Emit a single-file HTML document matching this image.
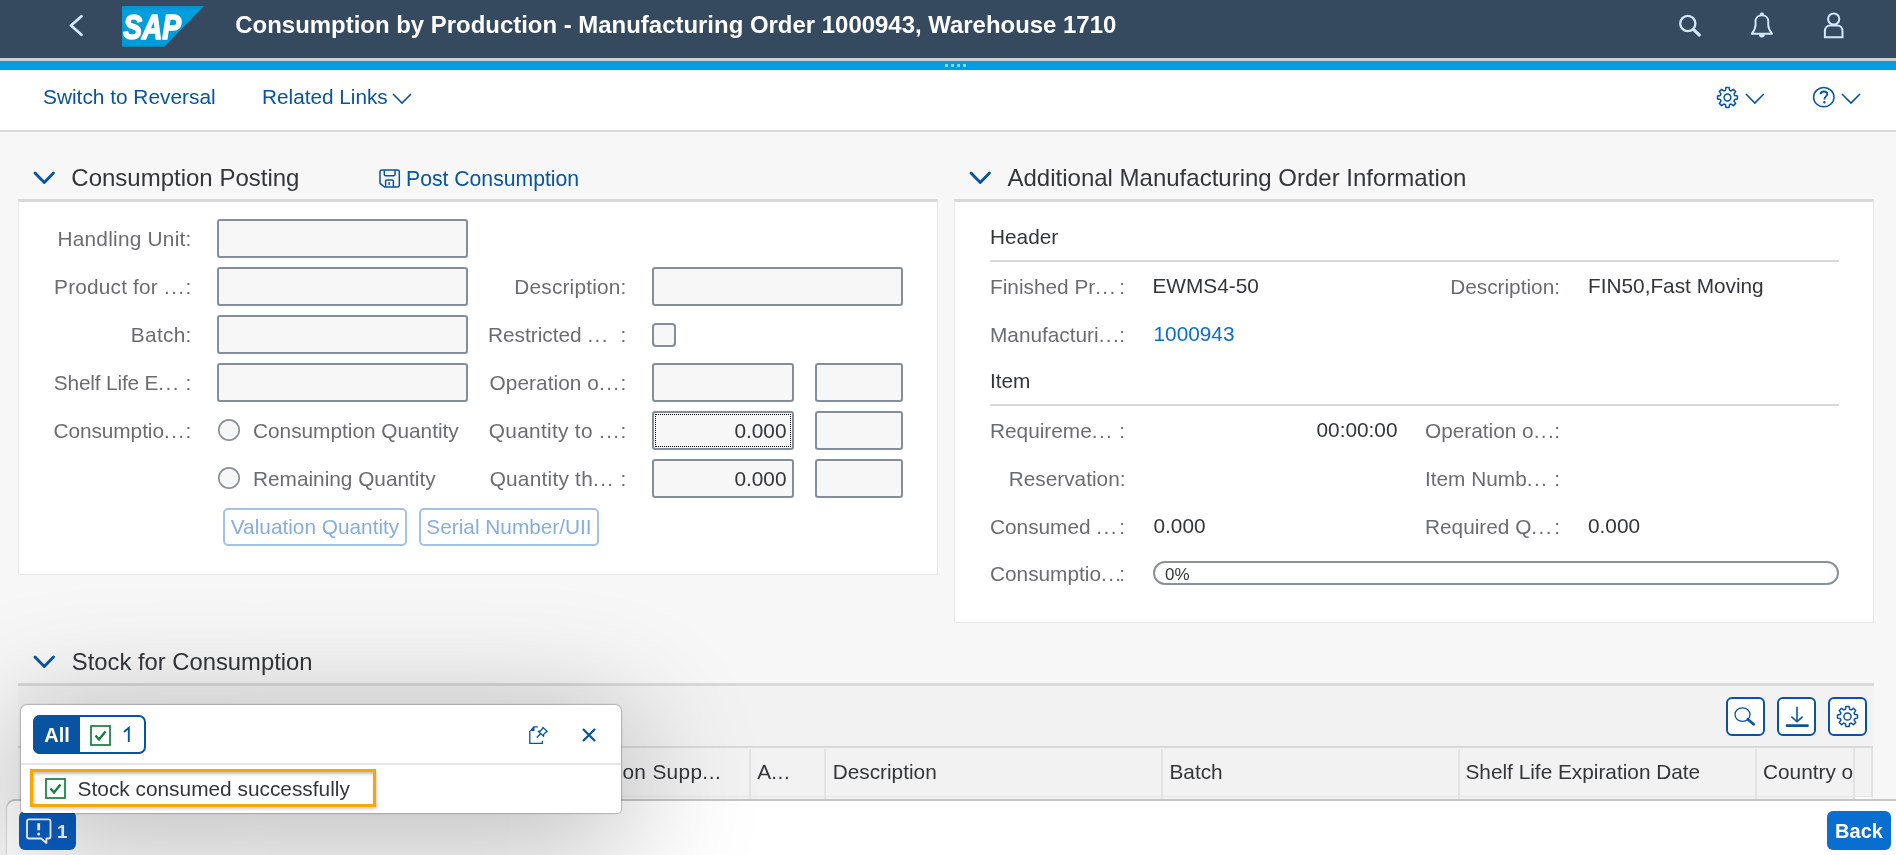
<!DOCTYPE html>
<html><head><meta charset="utf-8"><title>Consumption by Production</title>
<style>
html,body{margin:0;padding:0;width:1896px;height:855px;overflow:hidden;background:#f7f7f7;font-family:"Liberation Sans",sans-serif}
#w{position:absolute;left:0;top:0;width:1896px;height:855px;overflow:hidden;will-change:transform;-webkit-font-smoothing:antialiased}
.t{position:absolute;white-space:nowrap}
.r{position:absolute}
.e{letter-spacing:1.4px}
</style></head><body><div id="w">
<div class="r" style="left:0px;top:0px;width:1896px;height:855px;background:#f7f7f7"></div>
<div class="r" style="left:0px;top:0px;width:1896px;height:58px;background:#354a5f"></div>
<div class="r" style="left:0px;top:58px;width:1896px;height:3px;background:#cfd0d1"></div>
<div class="r" style="left:0px;top:61px;width:1896px;height:9px;background:#009de0"></div>
<div class="r" style="left:945px;top:64px;width:3px;height:3px;background:#93d2f1"></div>
<div class="r" style="left:951px;top:64px;width:3px;height:3px;background:#93d2f1"></div>
<div class="r" style="left:957px;top:64px;width:3px;height:3px;background:#93d2f1"></div>
<div class="r" style="left:963px;top:64px;width:3px;height:3px;background:#93d2f1"></div>
<svg class="r" style="left:60px;top:10px" width="32" height="32" viewBox="0 0 32 32"><path d="M21.5 6.3 L11 15.5 L21.5 24.8" fill="none" stroke="#d1e8ff" stroke-width="2.8" stroke-linecap="round" stroke-linejoin="round"/></svg>
<svg class="r" style="left:122px;top:6px" width="82" height="41" viewBox="0 0 82 41">
<defs><linearGradient id="lg" x1="0" y1="0" x2="0" y2="1"><stop offset="0" stop-color="#0890cf"/><stop offset="0.12" stop-color="#009fdd"/><stop offset="1" stop-color="#009ad9"/></linearGradient></defs>
<polygon points="0,0 82,0 42.3,40.7 0,40.7" fill="url(#lg)"/>
<text x="1.2" y="33" font-family="Liberation Sans" font-weight="bold" font-style="italic" font-size="35" fill="#fff" stroke="#fff" stroke-width="1.7" stroke-linejoin="round" textLength="58" lengthAdjust="spacingAndGlyphs">SAP</text>
</svg>
<div class="t" style="left:235.3px;top:13.33px;font-size:23.95px;line-height:23.95px;color:#ffffff;font-weight:bold;">Consumption by Production - Manufacturing Order 1000943, Warehouse 1710</div>
<svg class="r" style="left:1672px;top:8px" width="36" height="36" viewBox="0 0 36 36"><circle cx="15.8" cy="15.5" r="7.6" fill="none" stroke="#d1e8ff" stroke-width="2.3"/><path d="M21.6 21.6 L27.3 27" stroke="#d1e8ff" stroke-width="3.2" stroke-linecap="round"/></svg>
<svg class="r" style="left:1744px;top:8px" width="36" height="36" viewBox="0 0 36 36"><path d="M7.8 25.7 C10.5 22.5 11.6 20 11.6 16.5 L11.5 13.5 C11.5 9.5 14.5 7.2 17.9 7.2 C21.3 7.2 24.3 9.5 24.3 13.5 L24.2 16.5 C24.2 20 25.3 22.5 28 25.7 Z" fill="none" stroke="#d1e8ff" stroke-width="1.9" stroke-linejoin="round"/><path d="M14.9 26.3 A3 3.2 0 0 0 20.9 26.3 Z" fill="#d1e8ff"/><ellipse cx="17.9" cy="6" rx="1.9" ry="1.4" fill="#d1e8ff"/></svg>
<svg class="r" style="left:1816px;top:8px" width="36" height="36" viewBox="0 0 36 36"><circle cx="17.7" cy="11" r="5.6" fill="none" stroke="#d1e8ff" stroke-width="2"/><path d="M8.9 29.3 L8.9 23.5 C8.9 19.5 11.5 17.5 14 17.5 L21.5 17.5 C24 17.5 26.5 19.5 26.5 23.5 L26.5 29.3 Z" fill="none" stroke="#d1e8ff" stroke-width="2"/></svg>
<div class="r" style="left:0px;top:70px;width:1896px;height:60px;background:#ffffff"></div>
<div class="r" style="left:0px;top:130px;width:1896px;height:2px;background:#d9d9d9"></div>
<div class="t" style="left:43px;top:86.85px;font-size:20.85px;line-height:20.85px;color:#0854a0;font-weight:normal;">Switch to Reversal</div>
<div class="t" style="left:262px;top:86.94px;font-size:20.75px;line-height:20.75px;color:#0854a0;font-weight:normal;">Related Links</div>
<svg class="r" style="left:390px;top:91px" width="24" height="15" viewBox="0 0 24 15"><path d="M3 3 L12.0 12 L21 3" fill="none" stroke="#0854a0" stroke-width="1.6" stroke-linejoin="miter" stroke-linecap="butt"/></svg>
<svg class="r" style="left:1714.3px;top:83.9px" width="27" height="27" viewBox="0 0 27 27"><path d="M20.66 11.44 L23.42 11.90 L23.42 15.10 L20.66 15.56 L20.02 17.11 L21.65 19.38 L19.38 21.65 L17.11 20.02 L15.56 20.66 L15.10 23.42 L11.90 23.42 L11.44 20.66 L9.89 20.02 L7.62 21.65 L5.35 19.38 L6.98 17.11 L6.34 15.56 L3.58 15.10 L3.58 11.90 L6.34 11.44 L6.98 9.89 L5.35 7.62 L7.62 5.35 L9.89 6.98 L11.44 6.34 L11.90 3.58 L15.10 3.58 L15.56 6.34 L17.11 6.98 L19.38 5.35 L21.65 7.62 L20.02 9.89 Z" fill="none" stroke="#0854a0" stroke-width="1.5" stroke-linejoin="round"/><circle cx="13.5" cy="13.5" r="3.4" fill="none" stroke="#0854a0" stroke-width="1.5"/></svg>
<svg class="r" style="left:1743.3px;top:91px" width="23.7" height="15" viewBox="0 0 23.7 15"><path d="M3 3 L11.85 12 L20.7 3" fill="none" stroke="#0854a0" stroke-width="1.6" stroke-linejoin="miter" stroke-linecap="butt"/></svg>
<svg class="r" style="left:1810px;top:83px" width="28" height="28" viewBox="0 0 28 28"><ellipse cx="13.8" cy="14.2" rx="10.2" ry="9.6" fill="none" stroke="#0854a0" stroke-width="1.5"/><path d="M10.6 11.3 C10.6 9.2 12 8.5 14 8.5 C16 8.5 17.3 9.5 17.3 11.1 C17.3 13.4 14.4 13.5 14.4 16.4" fill="none" stroke="#0854a0" stroke-width="1.8"/><circle cx="14.4" cy="19.3" r="1.2" fill="#0854a0"/></svg>
<svg class="r" style="left:1839px;top:91px" width="24" height="15" viewBox="0 0 24 15"><path d="M3 3 L12.0 12 L21 3" fill="none" stroke="#0854a0" stroke-width="1.6" stroke-linejoin="miter" stroke-linecap="butt"/></svg>
<svg class="r" style="left:31.799999999999997px;top:170px" width="24.5" height="15.5" viewBox="0 0 24.5 15.5"><path d="M3 3 L12.25 12.5 L21.5 3" fill="none" stroke="#0854a0" stroke-width="2.9" stroke-linejoin="round" stroke-linecap="round"/></svg>
<div class="t" style="left:71.3px;top:166.18px;font-size:24px;line-height:24px;color:#32363a;font-weight:normal;">Consumption Posting</div>
<svg class="r" style="left:377px;top:166px" width="26" height="24" viewBox="0 0 26 24"><path d="M5 4 L20.5 4 Q22.3 4 22.3 5.8 L22.3 19.3 Q22.3 21 20.5 21 L7.5 21 L3 17.3 L3 5.8 Q3 4 5 4 Z" fill="none" stroke="#0854a0" stroke-width="1.5" stroke-linejoin="round"/><path d="M7.3 4 L7.3 8.5 Q7.3 9.8 8.6 9.8 L16.7 9.8 Q18 9.8 18 8.5 L18 4" fill="none" stroke="#0854a0" stroke-width="1.5"/><path d="M8.6 21 L8.6 15.2 Q8.6 14 9.8 14 L15.2 14 Q16.4 14 16.4 15.2 L16.4 21" fill="none" stroke="#0854a0" stroke-width="1.5"/><rect x="11.3" y="16.2" width="1.6" height="2.6" fill="#0854a0"/></svg>
<div class="t" style="left:406px;top:167.55px;font-size:21.2px;line-height:21.2px;color:#0854a0;font-weight:normal;">Post Consumption</div>
<div class="r" style="left:18px;top:199px;width:920px;height:376px;background:#fff;border:1px solid #e8e8e8;border-top:3px solid #d9d9d9;box-sizing:border-box"></div>
<div class="r" style="left:954px;top:199px;width:920px;height:424px;background:#fff;border:1px solid #e8e8e8;border-top:3px solid #d9d9d9;box-sizing:border-box"></div>
<div class="t" style="right:1704.45px;top:228.69px;font-size:20.8px;line-height:20.8px;color:#6a6d70;font-weight:normal;letter-spacing:0.25px">Handling Unit:</div>
<div class="t" style="right:1704.5px;top:276.69px;font-size:20.8px;line-height:20.8px;color:#6a6d70;font-weight:normal;letter-spacing:0.2px">Product for <span class="e">...</span>:</div>
<div class="t" style="right:1704.4px;top:324.69px;font-size:20.8px;line-height:20.8px;color:#6a6d70;font-weight:normal;letter-spacing:0.3px">Batch:</div>
<div class="t" style="right:1704.85px;top:372.69px;font-size:20.8px;line-height:20.8px;color:#6a6d70;font-weight:normal;letter-spacing:-0.15px">Shelf Life E<span class="e">...</span> :</div>
<div class="t" style="right:1704.75px;top:420.69px;font-size:20.8px;line-height:20.8px;color:#6a6d70;font-weight:normal;letter-spacing:-0.05px">Consumptio<span class="e">...</span>:</div>
<div class="r" style="left:217px;top:219px;width:251px;height:39px;background:#f7f7f7;border:2px solid #858d96;border-radius:3px;box-sizing:border-box"></div>
<div class="r" style="left:217px;top:267px;width:251px;height:39px;background:#f7f7f7;border:2px solid #858d96;border-radius:3px;box-sizing:border-box"></div>
<div class="r" style="left:217px;top:315px;width:251px;height:39px;background:#f7f7f7;border:2px solid #858d96;border-radius:3px;box-sizing:border-box"></div>
<div class="r" style="left:217px;top:363px;width:251px;height:39px;background:#f7f7f7;border:2px solid #858d96;border-radius:3px;box-sizing:border-box"></div>
<svg class="r" style="left:215px;top:415.8px" width="28" height="28" viewBox="0 0 28 28"><circle cx="14" cy="14" r="10.2" fill="#f7f7f7" stroke="#89919a" stroke-width="1.7"/></svg>
<div class="t" style="left:253px;top:420.69px;font-size:20.8px;line-height:20.8px;color:#6a6d70;font-weight:normal;">Consumption Quantity</div>
<svg class="r" style="left:215px;top:464px" width="28" height="28" viewBox="0 0 28 28"><circle cx="14" cy="14" r="10.2" fill="#f7f7f7" stroke="#89919a" stroke-width="1.7"/></svg>
<div class="t" style="left:253px;top:468.69px;font-size:20.8px;line-height:20.8px;color:#6a6d70;font-weight:normal;">Remaining Quantity</div>
<div class="t" style="right:1269.5px;top:276.69px;font-size:20.8px;line-height:20.8px;color:#6a6d70;font-weight:normal;letter-spacing:0.2px">Description:</div>
<div class="t" style="right:1269.7px;top:324.69px;font-size:20.8px;line-height:20.8px;color:#6a6d70;font-weight:normal;letter-spacing:0.0px">Restricted <span class="e">...</span>&nbsp; :</div>
<div class="t" style="right:1269.63px;top:372.69px;font-size:20.8px;line-height:20.8px;color:#6a6d70;font-weight:normal;letter-spacing:0.07px">Operation o<span class="e">...</span>:</div>
<div class="t" style="right:1269.38px;top:420.69px;font-size:20.8px;line-height:20.8px;color:#6a6d70;font-weight:normal;letter-spacing:0.32px">Quantity to <span class="e">...</span>:</div>
<div class="t" style="right:1269.45px;top:468.69px;font-size:20.8px;line-height:20.8px;color:#6a6d70;font-weight:normal;letter-spacing:0.25px">Quantity th<span class="e">...</span> :</div>
<div class="r" style="left:652px;top:267px;width:251px;height:39px;background:#f7f7f7;border:2px solid #858d96;border-radius:3px;box-sizing:border-box"></div>
<div class="r" style="left:652px;top:323px;width:24px;height:24px;background:#f7f7f7;border:2px solid #858d96;border-radius:4px;box-sizing:border-box"></div>
<div class="r" style="left:652px;top:363px;width:142px;height:39px;background:#f7f7f7;border:2px solid #858d96;border-radius:3px;box-sizing:border-box"></div>
<div class="r" style="left:815px;top:363px;width:88px;height:39px;background:#f7f7f7;border:2px solid #858d96;border-radius:3px;box-sizing:border-box"></div>
<div class="r" style="left:652px;top:411px;width:142px;height:39px;background:#f7f7f7;border:2px solid #858d96;border-radius:3px;box-sizing:border-box"></div>
<div class="r" style="left:655px;top:414px;width:136px;height:33px;border:1px dotted #000;box-sizing:border-box"></div>
<div class="t" style="right:1109.5px;top:420.69px;font-size:20.8px;line-height:20.8px;color:#32363a;font-weight:normal;">0.000</div>
<div class="r" style="left:815px;top:411px;width:88px;height:39px;background:#f7f7f7;border:2px solid #858d96;border-radius:3px;box-sizing:border-box"></div>
<div class="r" style="left:652px;top:459px;width:142px;height:39px;background:#f7f7f7;border:2px solid #858d96;border-radius:3px;box-sizing:border-box"></div>
<div class="t" style="right:1109.5px;top:468.69px;font-size:20.8px;line-height:20.8px;color:#32363a;font-weight:normal;">0.000</div>
<div class="r" style="left:815px;top:459px;width:88px;height:39px;background:#f7f7f7;border:2px solid #858d96;border-radius:3px;box-sizing:border-box"></div>
<div class="r" style="left:223px;top:507.5px;width:184px;height:38.5px;border:2px solid #a3c2e6;border-radius:5px;box-sizing:border-box;background:#fff"></div>
<div class="t" style="left:315.0px;transform:translateX(-50%);top:516.69px;font-size:20.8px;line-height:20.8px;color:#85ade0;font-weight:normal;">Valuation Quantity</div>
<div class="r" style="left:419px;top:507.5px;width:180px;height:38.5px;border:2px solid #a3c2e6;border-radius:5px;box-sizing:border-box;background:#fff"></div>
<div class="t" style="left:509.0px;transform:translateX(-50%);top:516.69px;font-size:20.8px;line-height:20.8px;color:#85ade0;font-weight:normal;">Serial Number/UII</div>
<svg class="r" style="left:967.8px;top:170px" width="24.5" height="15.5" viewBox="0 0 24.5 15.5"><path d="M3 3 L12.25 12.5 L21.5 3" fill="none" stroke="#0854a0" stroke-width="2.9" stroke-linejoin="round" stroke-linecap="round"/></svg>
<div class="t" style="left:1007.5px;top:166.18px;font-size:24px;line-height:24px;color:#32363a;font-weight:normal;">Additional Manufacturing Order Information</div>
<div class="t" style="left:990px;top:226.69px;font-size:20.8px;line-height:20.8px;color:#32363a;font-weight:normal;">Header</div>
<div class="r" style="left:990px;top:260px;width:849px;height:2px;background:#d9d9d9"></div>
<div class="t" style="left:990px;top:276.69px;font-size:20.8px;line-height:20.8px;color:#6a6d70;font-weight:normal;">Finished Pr<span class="e">...</span></div>
<div class="t" style="right:771px;top:276.69px;font-size:20.8px;line-height:20.8px;color:#6a6d70;font-weight:normal;">:</div>
<div class="t" style="left:1152.5px;top:275.69px;font-size:20.8px;line-height:20.8px;color:#32363a;font-weight:normal;">EWMS4-50</div>
<div class="t" style="right:336px;top:276.69px;font-size:20.8px;line-height:20.8px;color:#6a6d70;font-weight:normal;">Description:</div>
<div class="t" style="left:1588px;top:275.69px;font-size:20.8px;line-height:20.8px;color:#32363a;font-weight:normal;">FIN50,Fast Moving</div>
<div class="t" style="left:990px;top:324.69px;font-size:20.8px;line-height:20.8px;color:#6a6d70;font-weight:normal;">Manufacturi<span class="e">...</span></div>
<div class="t" style="right:771px;top:324.69px;font-size:20.8px;line-height:20.8px;color:#6a6d70;font-weight:normal;">:</div>
<div class="t" style="left:1153.5px;top:323.69px;font-size:20.8px;line-height:20.8px;color:#0a6ed1;font-weight:normal;">1000943</div>
<div class="t" style="left:990px;top:370.69px;font-size:20.8px;line-height:20.8px;color:#32363a;font-weight:normal;">Item</div>
<div class="r" style="left:990px;top:404px;width:849px;height:2px;background:#d9d9d9"></div>
<div class="t" style="left:990px;top:420.69px;font-size:20.8px;line-height:20.8px;color:#6a6d70;font-weight:normal;">Requireme<span class="e">...</span></div>
<div class="t" style="right:771px;top:420.69px;font-size:20.8px;line-height:20.8px;color:#6a6d70;font-weight:normal;">:</div>
<div class="t" style="right:498.5px;top:419.69px;font-size:20.8px;line-height:20.8px;color:#32363a;font-weight:normal;">00:00:00</div>
<div class="t" style="left:1425px;top:420.69px;font-size:20.8px;line-height:20.8px;color:#6a6d70;font-weight:normal;">Operation o<span class="e">...</span></div>
<div class="t" style="right:336px;top:420.69px;font-size:20.8px;line-height:20.8px;color:#6a6d70;font-weight:normal;">:</div>
<div class="t" style="right:770.5px;top:468.69px;font-size:20.8px;line-height:20.8px;color:#6a6d70;font-weight:normal;">Reservation:</div>
<div class="t" style="left:1425px;top:468.69px;font-size:20.8px;line-height:20.8px;color:#6a6d70;font-weight:normal;">Item Numb<span class="e">...</span></div>
<div class="t" style="right:336px;top:468.69px;font-size:20.8px;line-height:20.8px;color:#6a6d70;font-weight:normal;">:</div>
<div class="t" style="left:990px;top:516.69px;font-size:20.8px;line-height:20.8px;color:#6a6d70;font-weight:normal;">Consumed <span class="e">...</span></div>
<div class="t" style="right:771px;top:516.69px;font-size:20.8px;line-height:20.8px;color:#6a6d70;font-weight:normal;">:</div>
<div class="t" style="left:1153.5px;top:515.69px;font-size:20.8px;line-height:20.8px;color:#32363a;font-weight:normal;">0.000</div>
<div class="t" style="left:1425px;top:516.69px;font-size:20.8px;line-height:20.8px;color:#6a6d70;font-weight:normal;">Required Q<span class="e">...</span></div>
<div class="t" style="right:336px;top:516.69px;font-size:20.8px;line-height:20.8px;color:#6a6d70;font-weight:normal;">:</div>
<div class="t" style="left:1588px;top:515.69px;font-size:20.8px;line-height:20.8px;color:#32363a;font-weight:normal;">0.000</div>
<div class="t" style="left:990px;top:563.69px;font-size:20.8px;line-height:20.8px;color:#6a6d70;font-weight:normal;">Consumptio<span class="e">...</span></div>
<div class="t" style="right:771px;top:563.69px;font-size:20.8px;line-height:20.8px;color:#6a6d70;font-weight:normal;">:</div>
<div class="r" style="left:1153px;top:561px;width:686px;height:24px;border:2px solid #89919a;border-radius:12px;box-sizing:border-box;background:#fff"></div>
<div class="t" style="left:1165px;top:565.91px;font-size:17px;line-height:17px;color:#32363a;font-weight:normal;">0%</div>
<svg class="r" style="left:31.799999999999997px;top:653.5px" width="24.5" height="15.5" viewBox="0 0 24.5 15.5"><path d="M3 3 L12.25 12.5 L21.5 3" fill="none" stroke="#0854a0" stroke-width="2.9" stroke-linejoin="round" stroke-linecap="round"/></svg>
<div class="t" style="left:71.8px;top:649.55px;font-size:23.8px;line-height:23.8px;color:#32363a;font-weight:normal;">Stock for Consumption</div>
<div class="r" style="left:18px;top:683px;width:1856px;height:3px;background:#d9d9d9"></div>
<div class="r" style="left:18px;top:686px;width:1856px;height:61px;background:#f2f2f2"></div>
<div class="r" style="left:1726px;top:697px;width:39px;height:39px;border:2px solid #0854a0;border-radius:6px;box-sizing:border-box;background:#fff"></div>
<div class="r" style="left:1777px;top:697px;width:39px;height:39px;border:2px solid #0854a0;border-radius:6px;box-sizing:border-box;background:#fff"></div>
<div class="r" style="left:1828px;top:697px;width:39px;height:39px;border:2px solid #0854a0;border-radius:6px;box-sizing:border-box;background:#fff"></div>
<svg class="r" style="left:1726px;top:697px" width="39" height="39" viewBox="0 0 39 39"><ellipse cx="16.5" cy="17.6" rx="7.5" ry="6.8" fill="none" stroke="#0854a0" stroke-width="1.3"/><path d="M21.8 22.3 L27.6 27.3" stroke="#0854a0" stroke-width="2.7" stroke-linecap="round"/></svg>
<svg class="r" style="left:1777px;top:697px" width="39" height="39" viewBox="0 0 39 39"><path d="M20 9.8 L20 24.5" stroke="#0854a0" stroke-width="1.6"/><path d="M14.4 19.6 L20 24.8 L25.6 19.6" fill="none" stroke="#0854a0" stroke-width="1.5"/><path d="M10 28.7 L30.5 28.7" stroke="#0854a0" stroke-width="2.7" stroke-linecap="round"/></svg>
<svg class="r" style="left:1834.4px;top:703.0px" width="27" height="27" viewBox="0 0 27 27"><path d="M20.76 11.41 L23.52 11.88 L23.52 15.12 L20.76 15.59 L20.11 17.16 L21.73 19.44 L19.44 21.73 L17.16 20.11 L15.59 20.76 L15.12 23.52 L11.88 23.52 L11.41 20.76 L9.84 20.11 L7.56 21.73 L5.27 19.44 L6.89 17.16 L6.24 15.59 L3.48 15.12 L3.48 11.88 L6.24 11.41 L6.89 9.84 L5.27 7.56 L7.56 5.27 L9.84 6.89 L11.41 6.24 L11.88 3.48 L15.12 3.48 L15.59 6.24 L17.16 6.89 L19.44 5.27 L21.73 7.56 L20.11 9.84 Z" fill="none" stroke="#0854a0" stroke-width="1.5" stroke-linejoin="round"/><circle cx="13.5" cy="13.5" r="3.6" fill="none" stroke="#0854a0" stroke-width="1.5"/></svg>
<div class="r" style="left:18px;top:746px;width:1855px;height:53px;background:#f2f2f2;border-top:2px solid #d9d9d9;box-sizing:border-box"></div>
<div class="r" style="left:18px;top:796px;width:1855px;height:1px;background:#e5e5e5"></div>
<div class="r" style="left:1855px;top:797px;width:16px;height:3px;background:#fff"></div>
<div class="r" style="left:749px;top:749px;width:2px;height:52px;background:#e3e3e3"></div>
<div class="r" style="left:824px;top:749px;width:2px;height:52px;background:#e3e3e3"></div>
<div class="r" style="left:1161px;top:749px;width:2px;height:52px;background:#e3e3e3"></div>
<div class="r" style="left:1458px;top:749px;width:2px;height:52px;background:#e3e3e3"></div>
<div class="r" style="left:1755px;top:749px;width:2px;height:52px;background:#e3e3e3"></div>
<div class="r" style="left:1853px;top:748px;width:1.5px;height:52px;background:#e3e3e3"></div>
<div class="r" style="left:1871px;top:748px;width:2px;height:49px;background:#e3e3e3"></div>
<div class="t" style="right:1174.5px;top:762.09px;font-size:20.8px;line-height:20.8px;color:#32363a;font-weight:normal;letter-spacing:0.35px">ion Supp<span style="letter-spacing:0.6px">&#46;&#46;&#46;</span></div>
<div class="t" style="left:757.3px;top:762.09px;font-size:20.8px;line-height:20.8px;color:#32363a;font-weight:normal;">A<span style="letter-spacing:0.6px">&#46;&#46;&#46;</span></div>
<div class="t" style="left:832.7px;top:762.09px;font-size:20.8px;line-height:20.8px;color:#32363a;font-weight:normal;">Description</div>
<div class="t" style="left:1169.5px;top:762.09px;font-size:20.8px;line-height:20.8px;color:#32363a;font-weight:normal;">Batch</div>
<div class="t" style="left:1465.5px;top:762.09px;font-size:20.8px;line-height:20.8px;color:#32363a;font-weight:normal;">Shelf Life Expiration Date</div>
<div class="t" style="left:1763px;top:762.09px;width:90px;overflow:hidden;font-size:20.8px;line-height:20.8px;color:#32363a">Country of Origin</div>
<div class="r" style="left:7px;top:801px;width:1889px;height:54px;background:#fff;border-top-left-radius:8px;box-shadow:0 -2px 0 #c6c6c6, -1px -1px 1px rgba(0,0,0,0.12)"></div>
<div class="r" style="left:19px;top:811px;width:57px;height:39px;background:#0a5fc4;border-radius:6px"></div>
<svg class="r" style="left:19px;top:811px" width="40" height="39" viewBox="0 0 40 39"><path d="M10 8.3 L29.5 8.3 Q31.5 8.3 31.5 10.3 L31.5 25.5 Q31.5 27.5 29.5 27.5 L27.4 27.5 L27.4 32 L22.2 27.5 L10 27.5 Q8 27.5 8 25.5 L8 10.3 Q8 8.3 10 8.3 Z" fill="none" stroke="#fff" stroke-width="1.8" stroke-linejoin="round"/><path d="M19.7 12.2 L19.7 19.3" stroke="#fff" stroke-width="2.8"/><circle cx="19.7" cy="23" r="1.5" fill="#fff"/></svg>
<div class="t" style="left:57px;top:822.22px;font-size:19px;line-height:19px;color:#fff;font-weight:bold;">1</div>
<div class="r" style="left:1827px;top:811px;width:64px;height:39px;background:#0a6ed1;border-radius:6px"></div>
<div class="t" style="left:1859px;transform:translateX(-50%);top:821.37px;font-size:20px;line-height:20px;color:#fff;font-weight:bold;">Back</div>
<div class="r" style="left:21px;top:704.5px;width:600px;height:108px;background:#fff;border-radius:6px 6px 4px 4px;box-shadow:0 0 0 1px rgba(0,0,0,0.12), 0 0 3px rgba(0,0,0,0.2), 0 24px 130px 6px rgba(0,0,0,0.3)"></div>
<div class="r" style="left:33px;top:715px;width:113px;height:39px;border:2px solid #0854a0;border-radius:7px;box-sizing:border-box;background:#fff"></div>
<div class="r" style="left:33px;top:715px;width:47px;height:39px;background:#0854a0;border-radius:7px 0 0 7px"></div>
<div class="t" style="left:44.3px;top:725.37px;font-size:20px;line-height:20px;color:#fff;font-weight:bold;">All</div>
<svg class="r" style="left:90px;top:725px" width="21" height="21" viewBox="0 0 21 21"><rect x="1" y="1" width="19" height="19" fill="none" stroke="#107e3e" stroke-width="1.7"/><path d="M5.5 10.5 L9 14.5 L15.5 6.5" fill="none" stroke="#107e3e" stroke-width="2.4"/></svg>
<svg class="r" style="left:118px;top:724px" width="16" height="20" viewBox="0 0 16 20"><path d="M6 8 L10.8 3.9 L10.8 17.9" fill="none" stroke="#0854a0" stroke-width="1.9" stroke-linejoin="miter"/></svg>
<svg class="r" style="left:526px;top:724px" width="24" height="24" viewBox="0 0 24 24"><path d="M7.5 2.8 L11.8 2.8 M3.8 7 L3.8 19.3 L16.3 19.3 L16.3 16.8" fill="none" stroke="#0854a0" stroke-width="1.3"/><path d="M3.5 6.9 L7.3 2.4 L8.5 2.4 L8.5 7 Z" fill="#0854a0"/><path d="M17 3.4 L21.2 7.5 L19.4 8.6 L17.5 10.6 L17.6 12.4 L12.3 7.2 L14.2 7.2 L16 5.3 Z" fill="none" stroke="#0854a0" stroke-width="1.3" stroke-linejoin="round"/><path d="M14.5 9.8 L10.8 13.5" stroke="#0854a0" stroke-width="1.3"/></svg>
<svg class="r" style="left:580px;top:726.3px" width="18" height="18" viewBox="0 0 18 18"><path d="M3 3 L15 15 M15 3 L3 15" stroke="#0854a0" stroke-width="2.3"/></svg>
<div class="r" style="left:21px;top:763px;width:600px;height:2px;background:#e5e5e5"></div>
<div class="r" style="left:30px;top:769px;width:346px;height:38px;border:3px solid #f4a800;box-sizing:border-box;box-shadow:inset 1px 2px 3px rgba(0,0,0,0.25), 1px 2px 3px rgba(0,0,0,0.2)"></div>
<svg class="r" style="left:44.5px;top:778px" width="21" height="21" viewBox="0 0 21 21"><rect x="1" y="1" width="19" height="19" fill="none" stroke="#107e3e" stroke-width="1.7"/><path d="M5.5 10.5 L9 14.5 L15.5 6.5" fill="none" stroke="#107e3e" stroke-width="2.4"/></svg>
<div class="t" style="left:77.6px;top:779.15px;font-size:20.85px;line-height:20.85px;color:#32363a;font-weight:normal;">Stock consumed successfully</div>
</div></body></html>
